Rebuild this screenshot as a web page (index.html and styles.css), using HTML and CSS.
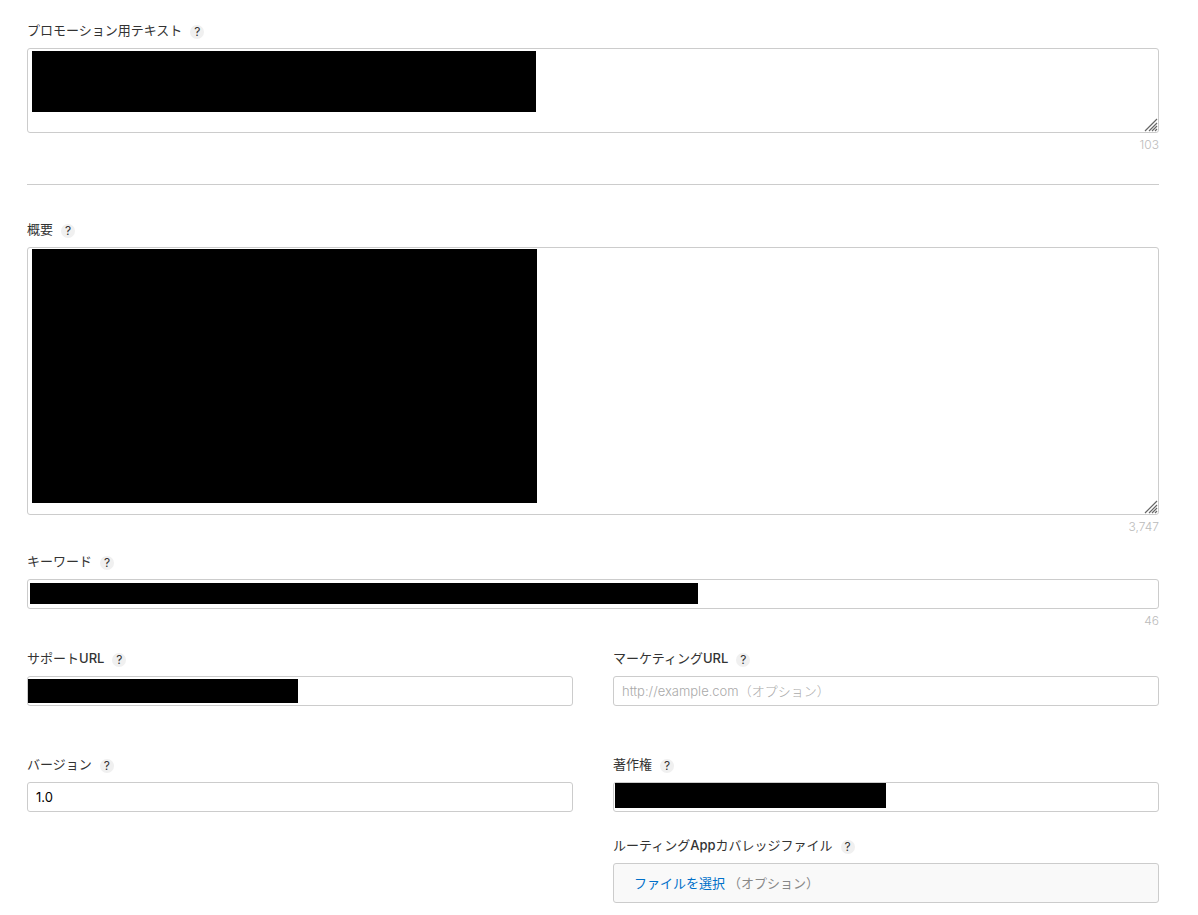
FILE: index.html
```
<!DOCTYPE html>
<html lang="ja">
<head>
  <meta charset="UTF-8">
  <meta name="viewport" content="width=device-width, initial-scale=1.0">
  <title>バージョン情報</title>
  <link rel="stylesheet" href="styles.css">
</head>
<body>
  <form class="version-form">
    <div class="field promo">
      <div class="field-label">
        <label for="promo-text">プロモーション用テキスト</label>
        <button type="button" class="help">?</button>
      </div>
      <div class="control">
        <textarea id="promo-text" name="promoText" class="short"></textarea>
        <span class="redacted redacted-promo"></span>
        <svg class="grip" viewBox="0 0 14 14" aria-hidden="true">
          <path d="M1 13L13 1M5 13L13 5M8 13L13 8M11 13L13 11"/>
        </svg>
      </div>
      <div class="count">103</div>
    </div>

    <hr>

    <div class="field">
      <div class="field-label">
        <label for="description">概要</label>
        <button type="button" class="help">?</button>
      </div>
      <div class="control">
        <textarea id="description" name="description" class="tall"></textarea>
        <span class="redacted redacted-description"></span>
        <svg class="grip" viewBox="0 0 14 14" aria-hidden="true">
          <path d="M1 13L13 1M5 13L13 5M8 13L13 8M11 13L13 11"/>
        </svg>
      </div>
      <div class="count">3,747</div>
    </div>

    <div class="field keywords">
      <div class="field-label">
        <label for="keywords">キーワード</label>
        <button type="button" class="help">?</button>
      </div>
      <div class="control">
        <input type="text" id="keywords" name="keywords">
        <span class="redacted redacted-keywords"></span>
      </div>
      <div class="count">46</div>
    </div>

    <div class="columns urls">
      <div class="field">
        <div class="field-label">
          <label for="support-url">サポート<span class="latin">URL</span></label>
          <button type="button" class="help">?</button>
        </div>
        <div class="control">
          <input type="text" id="support-url" name="supportUrl">
          <span class="redacted redacted-support"></span>
        </div>
      </div>
      <div class="field">
        <div class="field-label">
          <label for="marketing-url">マーケティング<span class="latin">URL</span></label>
          <button type="button" class="help">?</button>
        </div>
        <div class="control">
          <input type="text" id="marketing-url" name="marketingUrl" placeholder="http://example.com（オプション）">
        </div>
      </div>
    </div>

    <div class="columns">
      <div class="field">
        <div class="field-label">
          <label for="version">バージョン</label>
          <button type="button" class="help">?</button>
        </div>
        <div class="control">
          <input type="text" id="version" name="version" value="1.0">
        </div>
      </div>
      <div class="stack">
        <div class="field">
          <div class="field-label">
            <label for="copyright">著作権</label>
            <button type="button" class="help">?</button>
          </div>
          <div class="control">
            <input type="text" id="copyright" name="copyright">
            <span class="redacted redacted-copyright"></span>
          </div>
        </div>
        <div class="field">
          <div class="field-label">
            <label for="coverage-file">ルーティング<span class="latin">App</span>カバレッジファイル</label>
            <button type="button" class="help">?</button>
          </div>
          <div class="control file-box">
            <input type="file" id="coverage-file" name="coverageFile" class="file-input">
            <label for="coverage-file" class="file-link">ファイルを選択</label>
            <span class="optional">（オプション）</span>
          </div>
        </div>
      </div>
    </div>
  </form>
</body>
</html>
```
FILE: styles.css
```
* {
  box-sizing: border-box;
}
body {
  margin: 0;
  background: #fff;
  color: #333;
  font-family: Inter, "Noto Sans CJK JP", sans-serif;
  font-size: 13px;
  line-height: 18px;
}
.version-form {
  padding: 22px 39px 12px 27px;
}
hr {
  height: 1px;
  margin: 31px 0 36px;
  border: none;
  background: #ccc;
}
.field-label {
  display: flex;
  align-items: flex-end;
  gap: 8px;
  height: 17px;
  margin-bottom: 9px;
  line-height: 17px;
}
.latin {
  font-weight: 500;
}
.help {
  width: 14px;
  height: 14px;
  padding: 0;
  border: none;
  border-radius: 50%;
  background: #f0f0f0;
  color: #333;
  font: 400 12px/14px Inter, sans-serif;
  text-align: center;
  cursor: pointer;
}
.control {
  position: relative;
}
input[type="text"], textarea {
  display: block;
  width: 100%;
  border: 1px solid #ccc;
  border-radius: 3px;
  background: #fff;
  color: #000;
  font: inherit;
}
input[type="text"] {
  height: 30px;
  padding: 0 8px;
}
textarea {
  padding: 6px 8px;
  resize: vertical;
}
textarea::-webkit-resizer {
  display: none;
}
input[type="text"]:focus, textarea:focus {
  outline: none;
  border-color: #0070c9;
}
::placeholder {
  color: #aaa;
  font-weight: 300;
}
.short {
  height: 85px;
}
.tall {
  height: 268px;
}
.count {
  margin-top: 3px;
  color: #bbb;
  font-size: 12px;
  font-weight: 300;
  line-height: 17px;
  text-align: right;
}
.grip {
  position: absolute;
  right: 1px;
  bottom: 1px;
  width: 14px;
  height: 14px;
  fill: none;
  stroke: #666;
  stroke-width: 1.2;
  pointer-events: none;
}

/* Blacked-out field contents */
.redacted {
  position: absolute;
  background: #000;
}
.redacted-promo {
  top: 3px;
  left: 5px;
  width: 504px;
  height: 61px;
}
.redacted-description {
  top: 2px;
  left: 5px;
  width: 505px;
  height: 254px;
}
.redacted-keywords {
  top: 4px;
  left: 3px;
  width: 668px;
  height: 21px;
}
.redacted-support {
  top: 3px;
  left: 1px;
  width: 270px;
  height: 24px;
}
.redacted-copyright {
  top: 1px;
  left: 2px;
  width: 271px;
  height: 25px;
}

.keywords {
  margin-top: 18px;
}
.columns {
  display: grid;
  grid-template-columns: 1fr 1fr;
  gap: 40px;
}
.urls {
  margin: 21px 0 50px;
}
.stack {
  display: flex;
  flex-direction: column;
  gap: 25px;
}
.file-box {
  display: flex;
  align-items: center;
  gap: 3px;
  height: 40px;
  padding: 0 20px;
  border: 1px solid #ccc;
  border-radius: 3px;
  background: #f9f9f9;
}
.file-input {
  position: absolute;
  width: 1px;
  height: 1px;
  opacity: 0;
}
.file-link {
  color: #0070c9;
  cursor: pointer;
}
.optional {
  color: #888;
}
```
